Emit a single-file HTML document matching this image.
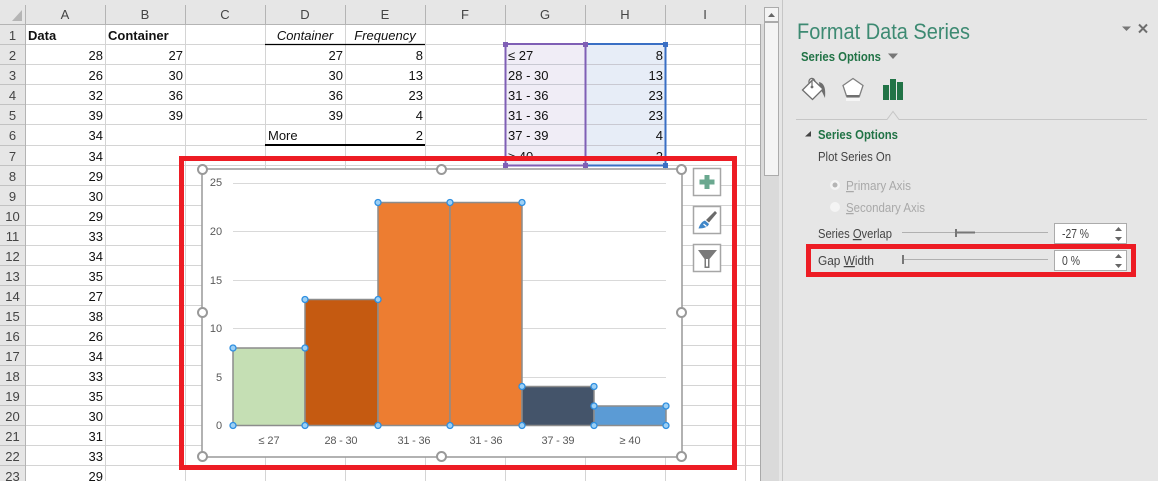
<!DOCTYPE html>
<html><head><meta charset="utf-8"><style>
html,body{margin:0;padding:0;background:#fff;width:1158px;height:481px;overflow:hidden}
svg{display:block}
text{font-family:"Liberation Sans",sans-serif}
.c{font-size:13px;fill:#111}
.r{text-anchor:end}
.h{font-size:13px;fill:#444;text-anchor:middle}
.l{stroke:#d4d4d4;stroke-width:1}
.a{font-size:11px;fill:#595959;text-anchor:middle}
.p{font-size:12.5px;fill:#444}
.d{font-size:12.5px;fill:#a9a9a9}
.hd{fill:#fff;stroke:#999;stroke-width:2}
.dp{fill:#9dd0f5;stroke:#2f8fe0;stroke-width:1.3}
.bar{stroke:#8c8c8c;stroke-width:1.5}
</style></head><body>
<svg width="1158" height="481" viewBox="0 0 1158 481" xmlns="http://www.w3.org/2000/svg" shape-rendering="geometricPrecision">
<rect width="1158" height="481" fill="#fff"/>
<!-- headers -->
<rect width="761" height="24" fill="#e6e6e6"/>
<rect y="0" width="25" height="481" fill="#e6e6e6"/>
<path d="M12 21 L22 21 L22 10 Z" fill="#b5b5b5"/>
<g stroke="#b4b4b4" stroke-width="1">
<path d="M25.5 5V24M105.5 5V24M185.5 5V24M265.5 5V24M345.5 5V24M425.5 5V24M505.5 5V24M585.5 5V24M665.5 5V24M745.5 5V24"/>
<path d="M0 24.5H760"/><path d="M25.5 24V481"/>
</g>
<g stroke="#c2c2c2" stroke-width="1"><path d="M0 44.5H25M0 64.5H25M0 84.5H25M0 104.5H25M0 124.5H25M0 145.5H25M0 165.5H25M0 185.5H25M0 205.5H25M0 225.5H25M0 245.5H25M0 265.5H25M0 285.5H25M0 305.5H25M0 325.5H25M0 345.5H25M0 365.5H25M0 385.5H25M0 405.5H25M0 425.5H25M0 445.5H25M0 465.5H25"/></g>
<!-- grid -->
<g class="l"><path class="l" d="M105.5 25V481M185.5 25V481M265.5 25V481M345.5 25V481M425.5 25V481M505.5 25V481M585.5 25V481M665.5 25V481M745.5 25V481"/>
<path class="l" d="M26 44.5H760M26 64.5H760M26 84.5H760M26 104.5H760M26 124.5H760M26 145.5H760M26 165.5H760M26 185.5H760M26 205.5H760M26 225.5H760M26 245.5H760M26 265.5H760M26 285.5H760M26 305.5H760M26 325.5H760M26 345.5H760M26 365.5H760M26 385.5H760M26 405.5H760M26 425.5H760M26 445.5H760M26 465.5H760"/></g>
<!-- col labels -->
<g><text class="h" x="65" y="19">A</text><text class="h" x="145" y="19">B</text><text class="h" x="225" y="19">C</text><text class="h" x="305" y="19">D</text><text class="h" x="385" y="19">E</text><text class="h" x="465" y="19">F</text><text class="h" x="545" y="19">G</text><text class="h" x="625" y="19">H</text><text class="h" x="705" y="19">I</text></g>
<!-- row labels -->
<g><text class="h" x="12.5" y="40">1</text><text class="h" x="12.5" y="60">2</text><text class="h" x="12.5" y="80">3</text><text class="h" x="12.5" y="100">4</text><text class="h" x="12.5" y="120">5</text><text class="h" x="12.5" y="140">6</text><text class="h" x="12.5" y="161">7</text><text class="h" x="12.5" y="181">8</text><text class="h" x="12.5" y="201">9</text><text class="h" x="12.5" y="221">10</text><text class="h" x="12.5" y="241">11</text><text class="h" x="12.5" y="261">12</text><text class="h" x="12.5" y="281">13</text><text class="h" x="12.5" y="301">14</text><text class="h" x="12.5" y="321">15</text><text class="h" x="12.5" y="341">16</text><text class="h" x="12.5" y="361">17</text><text class="h" x="12.5" y="381">18</text><text class="h" x="12.5" y="401">19</text><text class="h" x="12.5" y="421">20</text><text class="h" x="12.5" y="441">21</text><text class="h" x="12.5" y="461">22</text><text class="h" x="12.5" y="481">23</text></g>
<!-- selection fills -->
<rect x="506" y="45" width="79" height="120" fill="#f0edf6"/>
<rect x="586" y="45" width="79" height="120" fill="#e7edf7"/>
<path d="M506 64.5H665M506 84.5H665M506 104.5H665M506 124.5H665M506 145.5H665" stroke="#c9c9d2" stroke-width="1"/>
<!-- col A -->
<g class="c r">
<text class="c r" x="103" y="60">28</text><text class="c r" x="103" y="80">26</text><text class="c r" x="103" y="100">32</text><text class="c r" x="103" y="120">39</text><text class="c r" x="103" y="140">34</text><text class="c r" x="103" y="161">34</text><text class="c r" x="103" y="181">29</text><text class="c r" x="103" y="201">30</text><text class="c r" x="103" y="221">29</text><text class="c r" x="103" y="241">33</text><text class="c r" x="103" y="261">34</text><text class="c r" x="103" y="281">35</text><text class="c r" x="103" y="301">27</text><text class="c r" x="103" y="321">38</text><text class="c r" x="103" y="341">26</text><text class="c r" x="103" y="361">34</text><text class="c r" x="103" y="381">33</text><text class="c r" x="103" y="401">35</text><text class="c r" x="103" y="421">30</text><text class="c r" x="103" y="441">31</text><text class="c r" x="103" y="461">33</text><text class="c r" x="103" y="481">29</text>
<text class="c r" x="183" y="60">27</text><text class="c r" x="183" y="80">30</text><text class="c r" x="183" y="100">36</text><text class="c r" x="183" y="120">39</text>
<text class="c r" x="343" y="60">27</text><text class="c r" x="343" y="80">30</text><text class="c r" x="343" y="100">36</text><text class="c r" x="343" y="120">39</text>
<text class="c r" x="423" y="60">8</text><text class="c r" x="423" y="80">13</text><text class="c r" x="423" y="100">23</text><text class="c r" x="423" y="120">4</text><text class="c r" x="423" y="140">2</text>
<text class="c r" x="663" y="60">8</text><text class="c r" x="663" y="80">13</text><text class="c r" x="663" y="100">23</text><text class="c r" x="663" y="120">23</text><text class="c r" x="663" y="140">4</text><text class="c r" x="663" y="161">2</text>
</g>
<text class="c" x="28" y="40" font-weight="bold" style="font-size:13px">Data</text>
<text class="c" x="108" y="40" font-weight="bold" style="font-size:13px">Container</text>
<text class="c" x="305" y="40" font-style="italic" text-anchor="middle">Container</text>
<text class="c" x="385" y="40" font-style="italic" text-anchor="middle">Frequency</text>
<text class="c" x="268" y="140">More</text>
<path d="M265 44.5H425" stroke="#000" stroke-width="1.2"/>
<path d="M265 145H425" stroke="#000" stroke-width="2"/>
<text class="c" x="508" y="60">≤ 27</text><text class="c" x="508" y="80">28 - 30</text><text class="c" x="508" y="100">31 - 36</text><text class="c" x="508" y="120">31 - 36</text><text class="c" x="508" y="140">37 - 39</text><text class="c" x="508" y="161">≥ 40</text>
<!-- selection borders -->
<path d="M505.5 44V165.5H585.5V44Z" fill="none" stroke="#7f5fb5" stroke-width="2"/>
<path d="M585.5 44H665.5V165.5H585.5" fill="none" stroke="#3a6fc4" stroke-width="2"/>
<rect x="503" y="42" width="5" height="5" fill="#7f5fb5"/><rect x="583" y="42" width="5" height="5" fill="#7f5fb5"/><rect x="663" y="42" width="5" height="5" fill="#3a6fc4"/>
<rect x="503" y="163" width="5" height="5" fill="#7f5fb5"/><rect x="583" y="163" width="5" height="5" fill="#7f5fb5"/><rect x="663" y="163" width="5" height="5" fill="#3a6fc4"/>
<!-- red box -->
<rect x="181.5" y="158.5" width="553" height="309" fill="none" stroke="#ed1c24" stroke-width="5"/>
<!-- chart -->
<rect x="202" y="169" width="480" height="288" fill="#fff" stroke="#999" stroke-width="1.5"/>
<path d="M233 183.5H666M233 231.5H666M233 280.5H666M233 328.5H666M233 377.5H666" stroke="#d9d9d9" stroke-width="1"/>
<rect class="bar" x="233" y="348" width="72" height="77.5" fill="#c5dfb4"/>
<rect class="bar" x="305" y="299.5" width="73" height="126" fill="#c55a11"/>
<rect class="bar" x="378" y="202.5" width="72" height="223" fill="#ed7d31"/>
<rect class="bar" x="450" y="202.5" width="72" height="223" fill="#ed7d31"/>
<rect class="bar" x="522" y="386.5" width="72" height="39" fill="#44546a"/>
<rect class="bar" x="594" y="406" width="72" height="19.5" fill="#5b9bd5"/>
<g class="dp">
<circle class="dp" cx="233" cy="348" r="3"/><circle class="dp" cx="305" cy="348" r="3"/><circle class="dp" cx="233" cy="425.5" r="3"/><circle class="dp" cx="305" cy="425.5" r="3"/>
<circle class="dp" cx="305" cy="299.5" r="3"/><circle class="dp" cx="378" cy="299.5" r="3"/><circle class="dp" cx="378" cy="425.5" r="3"/>
<circle class="dp" cx="378" cy="202.5" r="3"/><circle class="dp" cx="450" cy="202.5" r="3"/><circle class="dp" cx="450" cy="425.5" r="3"/>
<circle class="dp" cx="522" cy="202.5" r="3"/><circle class="dp" cx="522" cy="425.5" r="3"/><circle class="dp" cx="522" cy="386.5" r="3"/>
<circle class="dp" cx="594" cy="386.5" r="3"/><circle class="dp" cx="594" cy="425.5" r="3"/><circle class="dp" cx="594" cy="406" r="3"/>
<circle class="dp" cx="666" cy="406" r="3"/><circle class="dp" cx="666" cy="425.5" r="3"/>
</g>
<text class="a" x="216" y="186">25</text><text class="a" x="216" y="235">20</text><text class="a" x="216" y="284">15</text><text class="a" x="216" y="332">10</text><text class="a" x="219" y="381">5</text><text class="a" x="219" y="429">0</text>
<text class="a" x="269" y="444">≤ 27</text><text class="a" x="341" y="444" textLength="33">28 - 30</text><text class="a" x="414" y="444" textLength="33">31 - 36</text><text class="a" x="486" y="444" textLength="33">31 - 36</text><text class="a" x="558" y="444" textLength="33">37 - 39</text><text class="a" x="630" y="444">≥ 40</text>
<circle class="hd" cx="202.5" cy="169.5" r="4.5"/><circle class="hd" cx="441.5" cy="169.5" r="4.5"/><circle class="hd" cx="681.5" cy="169.5" r="4.5"/>
<circle class="hd" cx="202.5" cy="312.5" r="4.5"/><circle class="hd" cx="681.5" cy="312.5" r="4.5"/>
<circle class="hd" cx="202.5" cy="456.5" r="4.5"/><circle class="hd" cx="441.5" cy="456.5" r="4.5"/><circle class="hd" cx="681.5" cy="456.5" r="4.5"/>
<!-- chart buttons -->
<g fill="#fff" stroke="#a6a6a6" stroke-width="1.5"><rect x="693.5" y="168.5" width="27" height="27"/><rect x="693.5" y="206.5" width="27" height="27"/><rect x="693.5" y="244.5" width="27" height="27"/></g>
<path d="M699.5 179.5H704.5V175H709.5V179.5H714.5V184.5H709.5V189H704.5V184.5H699.5Z" fill="#6aa88f"/>
<path d="M715 211 L717 213 L709 222.5 L706 220Z" fill="#6b6b6b"/>
<path d="M698.5 228.5 C700 224 702 221.5 705 220.5 L709 224 C708 227 704 228.5 698.5 228.5Z" fill="#3f86c8"/>
<path d="M703.5 224 L706.5 226.5" stroke="#fff" stroke-width="1.2"/>
<path d="M698 250 H717 L709.5 259 V268 H704.5 V259 Z" fill="#7a7a7a"/>
<path d="M706 259 V266.5 H708 V259 Z" fill="#fff"/>
<!-- scroll area -->
<rect x="760" y="24" width="1" height="457" fill="#a9a9a9"/>
<rect x="761" y="0" width="22" height="481" fill="#e6e6e6"/>
<rect x="761" y="24" width="18" height="457" fill="#dadada"/>
<rect x="761" y="0" width="18" height="24" fill="#e6e6e6"/>
<rect x="764.5" y="7.5" width="14" height="14" fill="#f4f4f4" stroke="#ababab"/>
<path d="M768 17 L771.5 13 L775 17Z" fill="#666"/>
<rect x="764.5" y="22.5" width="14" height="153" fill="#f4f4f4" stroke="#ababab"/>
<rect x="782" y="0" width="1" height="481" fill="#c6c6c6"/>
<!-- panel -->
<rect x="783" y="0" width="375" height="481" fill="#e6e6e6"/>
<text x="797" y="39" style="font-size:22px;fill:#3d8a72" textLength="173" lengthAdjust="spacingAndGlyphs">Format Data Series</text>
<path d="M1122 26.5H1131L1126.5 31Z" fill="#777"/>
<path d="M1139 24.5L1147 32.5M1147 24.5L1139 32.5" stroke="#6e6e6e" stroke-width="2"/>
<text x="801" y="61" style="font-size:12.5px;font-weight:bold;fill:#217346" textLength="80" lengthAdjust="spacingAndGlyphs">Series Options</text>
<path d="M888 53.5H898L893 59Z" fill="#777"/>
<!-- fill icon -->
<path d="M819 82 C824 83 826 88 825 98 C823 94 822 91 820 89Z" fill="#6e6e6e"/>
<path d="M802.5 90 L813 79.5 L823 89 L812.5 99.5 Z" fill="#fff" stroke="#6e6e6e" stroke-width="1.3"/>
<path d="M812 81 V87" stroke="#6e6e6e" stroke-width="1.2"/><circle cx="812" cy="87" r="1.4" fill="#6e6e6e"/>
<path d="M809 83 C808 77 815 77 815 82" fill="none" stroke="#6e6e6e" stroke-width="1.2"/>
<!-- pentagon icon -->
<path d="M853 78.5 L863 85.5 L859.5 96 H846.5 L843 85.5 Z" fill="#fff" stroke="#808080" stroke-width="1.3"/>
<rect x="846.5" y="95" width="13" height="2.5" fill="#707070"/>
<rect x="846" y="98" width="14" height="3" fill="#f6f6f6"/>
<!-- bars icon -->
<rect x="883" y="85" width="6" height="15" fill="#217346"/><rect x="890" y="79" width="6" height="21" fill="#217346"/><rect x="897" y="82" width="6" height="18" fill="#217346"/>
<path d="M796 119.5H887L893 111.5L899 119.5H1147" fill="none" stroke="#c6c6c6" stroke-width="1"/>
<path d="M805 136.5H811V131Z" fill="#444"/>
<text x="818" y="139" style="font-size:12.5px;font-weight:bold;fill:#217346" textLength="80" lengthAdjust="spacingAndGlyphs">Series Options</text>
<text class="p" x="818" y="161" textLength="73" lengthAdjust="spacingAndGlyphs">Plot Series On</text>
<circle cx="835" cy="185" r="5" fill="#f4f4f4"/><circle cx="835" cy="185" r="2.5" fill="#b5b5b5"/>
<circle cx="835" cy="207" r="5" fill="#f4f4f4"/>
<text class="d" x="846" y="190" textLength="65" lengthAdjust="spacingAndGlyphs"><tspan text-decoration="underline">P</tspan>rimary Axis</text>
<text class="d" x="846" y="212" textLength="79" lengthAdjust="spacingAndGlyphs"><tspan text-decoration="underline">S</tspan>econdary Axis</text>
<text class="p" x="818" y="238" textLength="74" lengthAdjust="spacingAndGlyphs">Series <tspan text-decoration="underline">O</tspan>verlap</text>
<path d="M902 232.5H1048" stroke="#b0b0b0" stroke-width="1"/>
<path d="M956 232.5H975" stroke="#777" stroke-width="2"/>
<rect x="955" y="229" width="2" height="8" fill="#777"/>
<rect x="1054.5" y="223.5" width="72" height="20" fill="#fff" stroke="#ababab"/>
<text class="p" x="1062" y="238" textLength="27" lengthAdjust="spacingAndGlyphs">-27 %</text>
<path d="M1115 231L1118.5 227L1122 231ZM1115 237L1118.5 241L1122 237Z" fill="#666"/>
<rect x="808.5" y="246.5" width="325" height="28" fill="none" stroke="#ed1c24" stroke-width="5"/>
<text class="p" x="818" y="265" textLength="56" lengthAdjust="spacingAndGlyphs">Gap <tspan text-decoration="underline">W</tspan>idth</text>
<path d="M902 259.5H1048" stroke="#b0b0b0" stroke-width="1"/>
<rect x="902" y="255" width="2" height="9" fill="#777"/>
<rect x="1054.5" y="250.5" width="72" height="20" fill="#fff" stroke="#ababab"/>
<text class="p" x="1062" y="265" textLength="18" lengthAdjust="spacingAndGlyphs">0 %</text>
<path d="M1115 258L1118.5 254L1122 258ZM1115 264L1118.5 268L1122 264Z" fill="#666"/>
</svg>
</body></html>
